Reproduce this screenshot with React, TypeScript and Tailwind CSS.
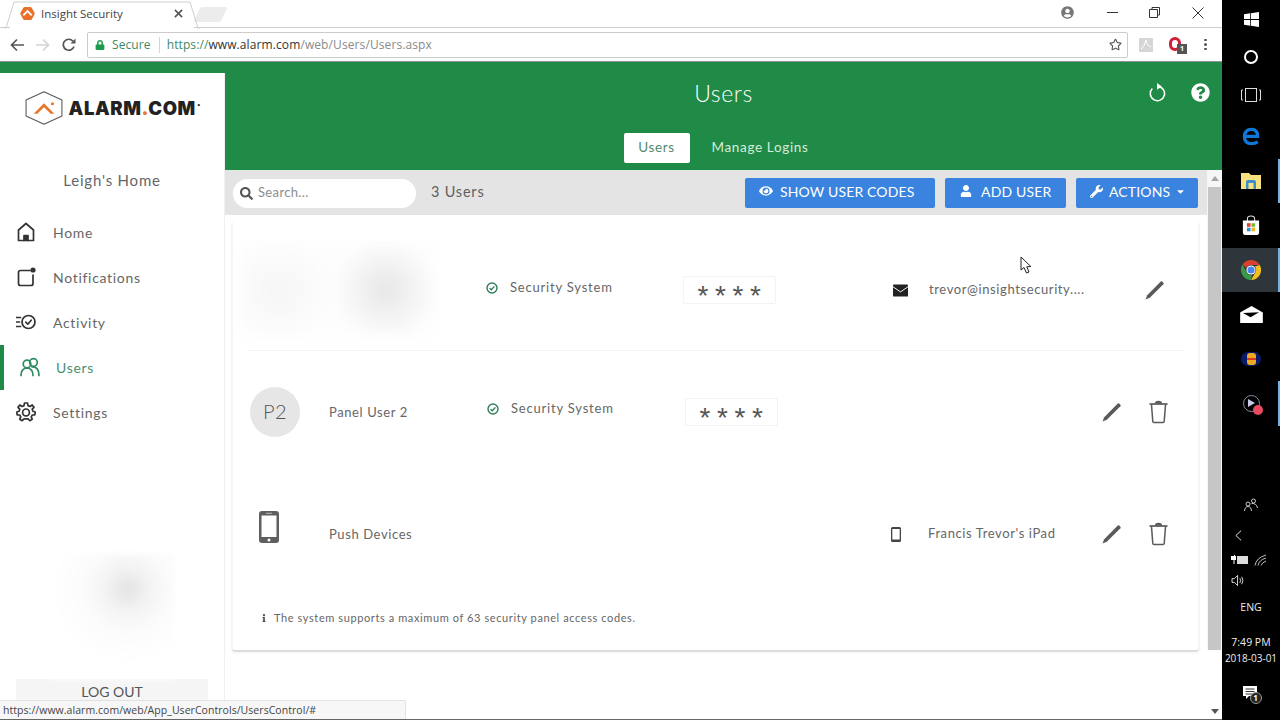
import React from 'react';
import { FaEye, FaUser, FaWrench, FaSearch, FaCaretDown, FaQuestionCircle, FaLock, FaRegStar, FaInfo, FaUserCircle } from 'react-icons/fa';

const site = "font-['Lato',sans-serif]";

function Pencil() {
  return (
    <svg viewBox="0 0 20 20" className="h-[20px] w-[20px]" fill="#5a5a5a">
      <path d="M0.5 19.5 L2.2 15.2 L15.8 1.6 Q16.5 1 17.2 1.6 L18.4 2.8 Q19 3.5 18.4 4.2 L4.8 17.8 Z" />
    </svg>
  );
}

function Trash() {
  return (
    <svg viewBox="0 0 20 24" className="h-[24px] w-[19px]" fill="none" stroke="#5a5a5a" strokeWidth="1.6">
      <path d="M0.5 3.6 H19.5" strokeWidth="1.8" />
      <path d="M7 3 Q7 1 10 1 Q13 1 13 3" fill="#5a5a5a" />
      <path d="M2.6 4 L4 22 Q4.1 23 5.2 23 H14.8 Q15.9 23 16 22 L17.4 4" />
    </svg>
  );
}

function Check() {
  return (
    <svg viewBox="0 0 12 12" className="h-[12px] w-[12px]" fill="none" stroke="#2f7d5b" strokeWidth="1.4">
      <circle cx="6" cy="6" r="5" />
      <path d="M3.6 6.2 L5.3 7.8 L8.4 4.4" />
    </svg>
  );
}

function Code() {
  return (
    <div className="flex h-[28px] w-[93px] items-center justify-center gap-[6px] rounded-[2px] border border-[#f3f3f3] font-['Liberation_Sans',sans-serif] text-[28px] text-[#555]">
      {[0, 1, 2, 3].map((i) => (
        <span key={i} className="mt-[12px] leading-none">*</span>
      ))}
    </div>
  );
}

function NavIcon({ name }: { name: string }) {
  const stroke = name === 'users' ? '#2e8b62' : '#333';
  return (
    <svg viewBox="0 0 20 20" className="h-[20px] w-[20px]" fill="none" stroke={stroke} strokeWidth="1.7" strokeLinecap="round" strokeLinejoin="round">
      {name === 'home' && (
        <>
          <path d="M2.5 18.5 V8 L10 1.5 L17.5 8 V18.5 Z" />
          <path d="M8 18.5 V13.5 H12 V18.5" fill="#333" />
        </>
      )}
      {name === 'notifications' && (
        <>
          <path d="M14 3.5 H4.5 Q2.5 3.5 2.5 5.5 V16.5 Q2.5 18.5 4.5 18.5 H15 Q17 18.5 17 16.5 V8" />
          <circle cx="17" cy="3" r="2.6" fill="#333" stroke="none" />
        </>
      )}
      {name === 'activity' && (
        <>
          <circle cx="12.5" cy="10" r="6.5" />
          <path d="M9.8 10.2 L11.8 12.2 L15.2 8.2" />
          <path d="M0.5 5.5 H4.5 M0.5 10 H3.5 M0.5 14.5 H4.5" />
        </>
      )}
      {name === 'users' && (
        <>
          <circle cx="7" cy="7" r="3.8" />
          <circle cx="13.5" cy="5.5" r="3.8" />
          <path d="M1 18.5 Q1 11.5 7 11 Q13 11.5 13 18.5" />
          <path d="M12 10 Q19 9.5 19 18.5" />
        </>
      )}
      {name === 'settings' && (
        <>
          <path d="M8.5 1 H11.5 L12 3.6 L14 4.5 L16.2 3 L18 5.3 L16.2 7.2 L16.9 9.2 L19.2 10 L18.8 12.8 L16.3 13 L15.2 14.9 L16.2 17.2 L13.8 18.7 L12.1 16.8 H8 L6.2 18.7 L3.8 17.2 L4.8 14.9 L3.7 13 L1.2 12.8 L0.8 10 L3.1 9.2 L3.8 7.2 L2 5.3 L3.8 3 L6 4.5 L8 3.6 Z" />
          <circle cx="10" cy="10.4" r="3.4" />
        </>
      )}
    </svg>
  );
}

function NavItem({ name, label }: { name: string; label: string }) {
  const active = name === 'users';
  return (
    <div className={`flex h-[45px] items-center border-l-[4px] ${active ? 'border-[#1f8a47] pl-[16px] text-[#4d8f72]' : 'border-transparent pl-[12px] text-[#666]'}`}>
      <NavIcon name={name} />
      <span className={`${active ? 'ml-[16px]' : 'ml-[17px]'} text-[14px] tracking-[0.7px]`}>{label}</span>
    </div>
  );
}

function Logo() {
  return (
    <div className="flex items-center justify-center">
      <svg viewBox="0 0 40 36" className="h-[34px] w-[40px]" fill="none">
        <path d="M20 0.8 L39 9.5 V26.5 L20 35.2 L1 26.5 V9.5 Z" stroke="#555" strokeWidth="1.1" strokeLinejoin="round" />
        <path d="M9 24 L20 13 L31 24 L27 24 L20 17.2 L13 24 Z" fill="#e57a2c" />
        <circle cx="29" cy="13.5" r="1.7" fill="#e57a2c" />
      </svg>
      <span className="ml-[5px] font-['Inter',sans-serif] text-[18.5px] font-black leading-none tracking-[0.6px] text-[#222]">
        ALARM<span className="text-[#e57a2c]">.</span>COM
      </span>
      <span className="mb-[6px] ml-[1px] text-[6px] leading-none text-[#333]">•</span>
    </div>
  );
}

function Sidebar() {
  return (
    <aside className={`${site} mt-[11px] flex w-[225px] shrink-0 flex-col border-r border-[#f0f0f0] bg-white`}>
      <div className="mt-[18px]">
        <Logo />
      </div>
      <div className="mt-[44px] text-center text-[15px] tracking-[0.8px] text-[#666]">Leigh's Home</div>
      <nav className="mt-[18px]">
        <NavItem name="home" label="Home" />
        <NavItem name="notifications" label="Notifications" />
        <NavItem name="activity" label="Activity" />
        <NavItem name="users" label="Users" />
        <NavItem name="settings" label="Settings" />
      </nav>
      <div className="mt-[119px] flex justify-center">
        <div className="h-[125px] w-[125px] bg-[radial-gradient(circle_at_62%_28%,#e3e3e3_0,#f3f3f3_22px,#fbfbfb_42px,#ffffff_75px)] blur-[3px]" />
      </div>
      <div className="mx-[16px] flex h-[40px] justify-center bg-[#f5f5f5] pt-[5px] text-[14px] leading-[16px] text-[#555]">LOG OUT</div>
    </aside>
  );
}

function BlueButton({ icon, label, className, children }: { icon: React.ReactNode; label: string; className: string; children?: React.ReactNode }) {
  return (
    <button className={`flex h-[30px] items-center rounded-[2px] bg-[#3a83de] pb-[4px] text-[14px] tracking-[0.15px] text-white ${className}`}>
      {icon}
      {label}
      {children}
    </button>
  );
}

function ContentRow({ height, identity, access, code, contact, actions }: { height: string; identity: React.ReactNode; access?: React.ReactNode; code?: React.ReactNode; contact?: React.ReactNode; actions: React.ReactNode }) {
  return (
    <div className={`grid grid-cols-[250px_198px_200px_215px_1fr] items-center ${height}`}>
      <div className="flex items-center">{identity}</div>
      <div>{access}</div>
      <div>{code}</div>
      <div>{contact}</div>
      {actions}
    </div>
  );
}

function UsersPanel() {
  return (
    <div className={`${site} flex min-w-0 flex-1 flex-col bg-[#208a47]`}>
      <header className="relative h-[108px] text-white">
        <h1 className="pt-[17px] text-center text-[23px] font-light leading-[28px] tracking-[0.6px]">Users</h1>
        <div className="mt-[26px] flex items-center justify-center pr-[15px] text-[13.5px] tracking-[0.65px]">
          <div className="flex h-[30px] w-[66px] items-center justify-center rounded-[2px] bg-white pb-[2px] text-[#4f8a6c]">Users</div>
          <div className="ml-[22px] pb-[2px] text-[#d6ecdc]">Manage Logins</div>
        </div>
        <svg viewBox="0 0 20 20" className="absolute left-[923px] top-[21px] h-[19px] w-[19px]" fill="none" stroke="white" strokeWidth="1.6">
          <path d="M10 3.6 A7.5 7.5 0 1 1 4.6 5.8" />
          <path d="M9.5 0 L14.5 3.6 L9.5 7 Z" fill="white" stroke="none" />
        </svg>
        <FaQuestionCircle className="absolute left-[966px] top-[21px] text-[19px] text-white" />
      </header>
      <div className="flex min-h-0 flex-1">
        <div className="flex min-w-0 flex-1 flex-col bg-white">
          <div className="flex h-[45px] items-center border-t border-[#dfe8e1] bg-[#e4e4e4] pl-[8px]">
            <div className="flex h-[29px] w-[183px] items-center rounded-full bg-white pl-[7px] text-[13px] tracking-[0.35px] text-[#8d8d8d]">
              <FaSearch className="mr-[5px] text-[13px] text-[#555]" />
              Search...
            </div>
            <div className="ml-[15px] pb-[2px] text-[14.5px] tracking-[0.8px] text-[#5f5f5f]">3 Users</div>
            <div className="ml-auto mr-[9px] flex gap-[10px]">
              <BlueButton className="w-[190px] pl-[14px]" icon={<FaEye className="mr-[7px] text-[14px]" />} label="SHOW USER CODES" />
              <BlueButton className="w-[121px] pl-[15px]" icon={<FaUser className="mr-[9px] text-[12px]" />} label="ADD USER" />
              <BlueButton className="w-[122px] pl-[14px]" icon={<FaWrench className="mr-[6px] text-[13px]" />} label="ACTIONS">
                <FaCaretDown className="ml-[5px] text-[11px]" />
              </BlueButton>
            </div>
          </div>
          <div className="ml-[7px] mr-[8px] mt-[7px] h-[428px] rounded-b-[3px] border-x border-[#f6f6f6] pt-[8px] text-[13px] tracking-[0.6px] text-[#666] shadow-[0_2px_2px_rgba(0,0,0,0.16)]">
            <ContentRow
              height="h-[120px]"
              identity={<div className="ml-[6px] h-[92px] w-[198px] bg-[#fdfdfd] bg-[radial-gradient(circle_at_74%_50%,#e6e6e6_0,#f3f3f3_28px,transparent_52px),radial-gradient(circle_at_20%_50%,#f6f6f6_0,transparent_55px)] blur-[6px]" />}
              access={
                <div className="-mt-[4px] flex items-center pl-[3px]">
                  <Check />
                  <span className="ml-[12px] tracking-[0.8px]">Security System</span>
                </div>
              }
              code={<div className="ml-[2px]"><Code /></div>}
              contact={
                <div className="flex items-center pl-[12px]">
                  <svg viewBox="0 0 16 13" className="h-[13px] w-[15px]">
                    <rect width="16" height="13" rx="1" fill="#222" />
                    <path d="M0 2.5 L8 8 L16 2.5" stroke="white" strokeWidth="1" fill="none" />
                  </svg>
                  <span className="ml-[21px] whitespace-nowrap">trevor@insightsecurity....</span>
                </div>
              }
              actions={<div className="flex justify-end pr-[33px]"><Pencil /></div>}
            />
            <div className="mx-[15px] h-px bg-[#f3f3f3]" />
            <ContentRow
              height="h-[122px]"
              identity={
                <>
                  <div className="ml-[17px] flex h-[50px] w-[50px] items-center justify-center rounded-full bg-[#e6e6e6] pb-[3px] text-[20px] font-light tracking-[0.5px] text-[#555]">P2</div>
                  <span className="ml-[29px] mt-[1px]">Panel User 2</span>
                </>
              }
              access={
                <div className="-mt-[6px] flex items-center pl-[4px]">
                  <Check />
                  <span className="ml-[12px] tracking-[0.8px]">Security System</span>
                </div>
              }
              code={<div className="ml-[4px]"><Code /></div>}
              actions={<div className="flex items-center justify-end gap-[27px] pr-[30px]"><Pencil /><Trash /></div>}
            />
            <ContentRow
              height="h-[122px]"
              identity={
                <>
                  <svg viewBox="0 0 20 32" className="-mt-[14px] ml-[26px] h-[32px] w-[20px]">
                    <path fillRule="evenodd" d="M3 0 H17 Q20 0 20 3 V29 Q20 32 17 32 H3 Q0 32 0 29 V3 Q0 0 3 0 Z M2.5 4.5 V26 H17.5 V4.5 Z" fill="#5f5f5f" />
                    <circle cx="10" cy="29" r="1.5" fill="white" />
                    <rect x="7" y="1.8" width="6" height="1" fill="#bbb" />
                  </svg>
                  <span className="ml-[50px] mt-[1px]">Push Devices</span>
                </>
              }
              contact={
                <div className="flex items-center pl-[10px]">
                  <svg viewBox="0 0 10 15" className="h-[15px] w-[10px]">
                    <path fillRule="evenodd" d="M1.5 0 H8.5 Q10 0 10 1.5 V13.5 Q10 15 8.5 15 H1.5 Q0 15 0 13.5 V1.5 Q0 0 1.5 0 Z M1.3 2 V12.5 H8.7 V2 Z" fill="#444" />
                  </svg>
                  <span className="ml-[27px] whitespace-nowrap">Francis Trevor's iPad</span>
                </div>
              }
              actions={<div className="flex items-center justify-end gap-[27px] pr-[30px]"><Pencil /><Trash /></div>}
            />
            <div className="flex h-[46px] items-center pl-[27px] text-[11px] tracking-[0.6px]">
              <FaInfo className="text-[8px] text-[#555]" />
              <span className="ml-[6px]">The system supports a maximum of 63 security panel access codes.</span>
            </div>
          </div>
        </div>
        <div className="flex w-[15px] shrink-0 flex-col bg-[#f6f6f6] text-[#777]">
          <div className="flex h-[17px] items-center justify-center">
            <div className="h-0 w-0 border-x-[4px] border-b-[5px] border-x-transparent border-b-[#a5a5a5]" />
          </div>
          <div className="mx-[1px] h-[463px] bg-[#c6c6c6]" />
          <div className="flex-1 bg-white" />
          <div className="flex h-[17px] items-center justify-center bg-white">
            <div className="h-0 w-0 border-x-[4px] border-t-[5px] border-x-transparent border-t-[#555]" />
          </div>
        </div>
      </div>
    </div>
  );
}

function BrowserChrome() {
  const ui = "font-['Open_Sans',sans-serif]";
  return (
    <div className={`${ui} shrink-0 bg-white`}>
      <div className="relative flex h-[28px] items-end border-b border-[#cfcfcf]">
        <div className="relative z-10 -mb-px ml-[10px] flex h-[27px] w-[184px] items-center bg-white pb-[2px] pl-[10px] text-[11.5px] text-[#444]">
          <svg viewBox="0 0 196 28" preserveAspectRatio="none" className="absolute -left-[6px] top-0 h-[28px] w-[196px]" fill="none" stroke="#cfcfcf">
            <path d="M0 27 H2 L10 1 H186 L194 27 H196" />
          </svg>
          <svg viewBox="0 0 16 16" className="relative h-[15px] w-[15px]">
            <path d="M5 1 H11 Q12 1 12.6 2 L15.4 7 Q16 8 15.4 9 L12.6 14 Q12 15 11 15 H5 Q4 15 3.4 14 L0.6 9 Q0 8 0.6 7 L3.4 2 Q4 1 5 1 Z" fill="#e8702a" />
            <path d="M3.5 10 L8 5.5 L12.5 10" stroke="white" strokeWidth="2" fill="none" />
          </svg>
          <span className="relative ml-[6px]">Insight Security</span>
          <svg viewBox="0 0 10 10" className="relative ml-[51px] h-[9px] w-[9px]" stroke="#555" strokeWidth="1.8">
            <path d="M1 1 L9 9 M9 1 L1 9" />
          </svg>
        </div>
        <div className="mb-[5px] ml-[3px] h-[15px] w-[27px] -skew-x-[25deg] rounded-[2px] bg-[#ececec]" />
        <div className="ml-auto flex h-[25px] items-center self-start text-[#555]">
          <FaUserCircle className="mr-[33px] text-[13px] text-[#777]" />
          <div className="h-px w-[11px] bg-[#333]" />
          <svg viewBox="0 0 11 11" className="ml-[31px] h-[11px] w-[11px]" fill="none" stroke="#333">
            <path d="M3 2.5 V0.5 H10.5 V8 H8.5 M0.5 2.5 H8.5 V10.5 H0.5 Z" />
          </svg>
          <svg viewBox="0 0 12 12" className="ml-[32px] mr-[18px] h-[12px] w-[12px]" stroke="#333" strokeWidth="1">
            <path d="M0.5 0.5 L11.5 11.5 M11.5 0.5 L0.5 11.5" />
          </svg>
        </div>
      </div>
      <div className="flex h-[34px] items-center border-b border-[#8f8f8f]">
        <svg viewBox="0 0 14 14" className="ml-[10px] h-[14px] w-[14px]" fill="none" stroke="#555" strokeWidth="1.7">
          <path d="M14 7 H1.5 M7 1.5 L1.5 7 L7 12.5" />
        </svg>
        <svg viewBox="0 0 14 14" className="ml-[12px] h-[14px] w-[14px]" fill="none" stroke="#d4d4d4" strokeWidth="1.7">
          <path d="M0 7 H12.5 M7 1.5 L12.5 7 L7 12.5" />
        </svg>
        <svg viewBox="0 0 14 14" className="ml-[12px] h-[14px] w-[14px]" fill="none" stroke="#555" strokeWidth="1.7">
          <path d="M12 8.5 A5.5 5.5 0 1 1 11 3.2" />
          <path d="M13.5 0.5 V5.5 H8.5 Z" fill="#555" stroke="none" />
        </svg>
        <div className="ml-[11px] flex h-[26px] w-[1041px] items-center rounded-[2px] border border-[#cbcbcb] pl-[7px] text-[12px] tracking-[0.1px]">
          <FaLock className="text-[10px] text-[#1f9b50]" />
          <span className="ml-[7px] text-[#3f8a67]">Secure</span>
          <div className="ml-[8px] mr-[7px] h-[16px] w-px bg-[#d5d5d5]" />
          <span className="text-[#3f8a67]">https://</span>
          <span className="text-[#333]">www.alarm.com</span>
          <span className="text-[#8a8a8a]">/web/Users/Users.aspx</span>
          <FaRegStar className="ml-auto mr-[5px] text-[13px] text-[#555]" />
        </div>
        <svg viewBox="0 0 14 14" className="ml-[11px] h-[14px] w-[14px]">
          <rect width="14" height="14" fill="#d6d6d6" />
          <path d="M2 11 Q6 8 7 2 Q8 8 12 9" stroke="white" fill="none" />
        </svg>
        <div className="relative ml-[16px] h-[16px] w-[16px]">
          <div className="h-[14px] w-[12px] rounded-full border-[3px] border-[#cf1f37]" />
          <div className="absolute left-[8px] top-[7px] flex h-[10px] w-[10px] items-center justify-center bg-[#555] text-[7px] font-bold leading-none text-white">1</div>
        </div>
        <div className="ml-[19px] flex flex-col gap-[2px]">
          <div className="h-[2.5px] w-[2.5px] rounded-full bg-[#555]" />
          <div className="h-[2.5px] w-[2.5px] rounded-full bg-[#555]" />
          <div className="h-[2.5px] w-[2.5px] rounded-full bg-[#555]" />
        </div>
      </div>
    </div>
  );
}

function TaskSlot({ children, small, active, accent }: { children: React.ReactNode; small?: boolean; active?: boolean; accent?: boolean }) {
  return (
    <div className={`flex w-full items-center justify-center border-r-[2px] pl-[2px] ${small ? 'h-[38px]' : 'h-[44.5px]'} ${active ? 'bg-[#2e353b]' : ''} ${accent ? 'border-[#76b0e0]' : 'border-transparent'}`}>
      {children}
    </div>
  );
}

function Taskbar() {
  return (
    <aside className="flex w-[58px] shrink-0 flex-col items-center bg-black font-['Open_Sans',sans-serif] text-white">
      <TaskSlot small>
        <svg viewBox="0 0 16 16" className="h-[15px] w-[15px]" fill="white">
          <path d="M0 2.3 L6.6 1.4 V7.5 H0 Z M7.4 1.3 L16 0 V7.5 H7.4 Z M0 8.4 H6.6 V14.6 L0 13.7 Z M7.4 8.4 H16 V16 L7.4 14.7 Z" />
        </svg>
      </TaskSlot>
      <TaskSlot small>
        <div className="h-[14px] w-[14px] rounded-full border-[2px] border-white" />
      </TaskSlot>
      <TaskSlot small>
        <svg viewBox="0 0 20 14" className="h-[14px] w-[20px]" fill="none" stroke="#ddd" strokeWidth="1">
          <rect x="4.5" y="0.5" width="11" height="13" />
          <path d="M2 2 H0.5 V12 H2 M18 2 H19.5 V12 H18" />
        </svg>
      </TaskSlot>
      <TaskSlot>
        <svg viewBox="0 0 20 20" className="h-[20px] w-[19px]" fill="none" stroke="#0d78d8" strokeWidth="3.4">
          <path d="M3 10.5 H16.5 Q16.5 3 9.8 3 Q3 3 2.5 10.5 Q2.5 18 10 18 Q14 18 16.5 16" />
        </svg>
      </TaskSlot>
      <TaskSlot accent>
        <svg viewBox="0 0 20 16" className="h-[16px] w-[20px]">
          <path d="M0 0 H8 L10 2 H20 V16 H0 Z" fill="#f6e27f" />
          <path d="M5 16 V9 Q5 7 7 7 H13 Q15 7 15 9 V16 H12.5 V10 H7.5 V16 Z" fill="#3d8fc9" />
        </svg>
      </TaskSlot>
      <TaskSlot>
        <svg viewBox="0 0 20 22" className="h-[20px] w-[18px]">
          <path d="M6 7 V4 Q6 1 10 1 Q14 1 14 4 V7" stroke="#ddd" fill="none" strokeWidth="1.2" />
          <path d="M1 6 H19 V20 Q19 22 17 22 H3 Q1 22 1 20 Z" fill="white" />
          <rect x="5.5" y="9" width="4" height="4" fill="#e0402c" />
          <rect x="10.5" y="9" width="4" height="4" fill="#7cb82f" />
          <rect x="5.5" y="14" width="4" height="4" fill="#2a8fdc" />
          <rect x="10.5" y="14" width="4" height="4" fill="#f3b51c" />
        </svg>
      </TaskSlot>
      <TaskSlot active accent>
        <svg viewBox="0 0 20 20" className="h-[20px] w-[20px]">
          <path d="M10 0 A10 10 0 0 1 18.7 5 L10 5 A5 5 0 0 0 5.5 8 L1.6 4.6 A10 10 0 0 1 10 0 Z" fill="#d8412f" />
          <path d="M18.7 5 A10 10 0 0 1 10 20 L14.3 12.5 A5 5 0 0 0 13.8 6.5 Z" fill="#f4c020" />
          <path d="M10 20 A10 10 0 0 1 1.6 4.6 L5.7 12.5 A5 5 0 0 0 11 14.9 Z" fill="#3a9a48" />
          <circle cx="10" cy="10" r="4.6" fill="white" />
          <circle cx="10" cy="10" r="3.6" fill="#4a85ee" />
        </svg>
      </TaskSlot>
      <TaskSlot>
        <svg viewBox="0 0 24 18" className="h-[17px] w-[23px]">
          <path d="M0 7 L12 0 L24 7 V18 H0 Z" fill="white" />
          <path d="M3 7.5 L20 6.5 L11 12 Z" fill="#000" />
        </svg>
      </TaskSlot>
      <TaskSlot>
        <div className="relative flex h-[14px] w-[20px] items-center justify-center rounded-full bg-[#0a1a6a]">
          <div className="h-[12px] w-[9px] rounded-[3px] bg-[#eda921]" />
          <div className="absolute h-[2px] w-[9px] bg-[#d9381e]" />
        </div>
      </TaskSlot>
      <TaskSlot accent>
        <div className="relative h-[17px] w-[17px] rounded-full border border-[#8a8aa5]">
          <div className="absolute left-[4px] top-[3px] h-0 w-0 border-y-[4px] border-l-[7px] border-y-transparent border-l-[#c9c9e8]" />
          <div className="absolute left-[9px] top-[9px] h-[10px] w-[10px] rounded-full bg-[#e84a5f]" />
        </div>
      </TaskSlot>
      <div className="mt-[72px] flex w-full flex-col items-center">
        <svg viewBox="0 0 14 13" className="h-[13px] w-[14px]" fill="none" stroke="#ddd" strokeWidth="0.9">
          <circle cx="4" cy="6" r="2" />
          <circle cx="9.5" cy="3" r="2" />
          <path d="M0.5 13 Q1 8.5 4 8.5 Q7 8.5 7.5 13 M7.5 5.5 Q12.5 5 13.5 10" />
        </svg>
        <svg viewBox="0 0 8 12" className="-ml-[26px] mt-[19px] h-[11px] w-[7px]" fill="none" stroke="white" strokeWidth="1">
          <path d="M7 0.5 L1 6 L7 11.5" />
        </svg>
        <div className="mt-[13px] flex w-full items-center justify-between pl-[9px] pr-[12px]">
          <svg viewBox="0 0 17 10" className="h-[10px] w-[17px]" fill="white">
            <path d="M0 1 H3 V0 H4 V1 H5 V5 H3.5 V9 H2.5 V5 H0 Z" />
            <rect x="6" y="1" width="11" height="8" fill="#ddd" />
          </svg>
          <svg viewBox="0 0 14 12" className="h-[12px] w-[14px]" fill="none" stroke="#bbb" strokeWidth="1">
            <path d="M1 11.5 Q2 4 12 1 M4 11.5 Q5 6 12 4 M7 11.5 Q8 8.5 12 7" />
          </svg>
        </div>
        <svg viewBox="0 0 16 14" className="-ml-[26px] mt-[8px] h-[13px] w-[15px]" fill="none" stroke="white" strokeWidth="0.9">
          <path d="M1 5 H3.5 L7 1.5 V12.5 L3.5 9 H1 Z M9.5 4.5 Q11 7 9.5 9.5 M11.5 3 Q14 7 11.5 11" />
        </svg>
        <div className="mt-[13px] text-[10.5px] leading-[14px] text-[#eee]">ENG</div>
        <div className="mt-[20px] whitespace-nowrap text-[10.5px] leading-[16px] text-[#eee]">7:49 PM</div>
        <div className="whitespace-nowrap text-[10px] leading-[16px] text-[#eee]">2018-03-01</div>
        <div className="relative mt-[20px] h-[17px] w-[17px]">
          <svg viewBox="0 0 14 14" className="h-[14px] w-[14px]" fill="white">
            <path d="M0 0 H14 V10 H6 L3 13 V10 H0 Z" />
            <path d="M2.5 3 H11.5 M2.5 5.5 H11.5 M2.5 8 H9" stroke="#000" strokeWidth="0.8" />
          </svg>
          <div className="absolute left-[7px] top-[6px] flex h-[12px] w-[12px] items-center justify-center rounded-full border border-[#999] bg-[#222] text-[8px] font-bold leading-none">1</div>
        </div>
      </div>
    </aside>
  );
}

export default function App() {
  return (
    <div className="relative flex h-[720px] w-[1280px] overflow-hidden">
      <div className="flex w-[1222px] flex-col">
        <BrowserChrome />
        <div className="flex min-h-0 flex-1 bg-[#208a47]">
          <Sidebar />
          <UsersPanel />
        </div>
      </div>
      <Taskbar />

      {/* mouse pointer */}
      <svg viewBox="0 0 12 18" className="absolute left-[1020px] top-[256px] h-[18px] w-[12px]" fill="white" stroke="#222" strokeWidth="1">
        <path d="M1 1 V14 L4 11.5 L6.5 17 L9 16 L6.8 10.8 L10.8 10.5 Z" />
      </svg>

      {/* link preview at the bottom of the window */}
      <div className="absolute bottom-[1px] left-0 flex h-[19px] w-[406px] items-center rounded-tr-[2px] border-r border-t border-[#e2e2e2] bg-[#f7f7f7] pl-[3px] pt-[1px] font-['Open_Sans',sans-serif] text-[10.5px] tracking-[0.05px] text-[#444]">
        https://www.alarm.com/web/App_UserControls/UsersControl/#
      </div>
      <div className="absolute bottom-0 left-0 h-px w-[1222px] bg-[#666]" />
    </div>
  );
}
